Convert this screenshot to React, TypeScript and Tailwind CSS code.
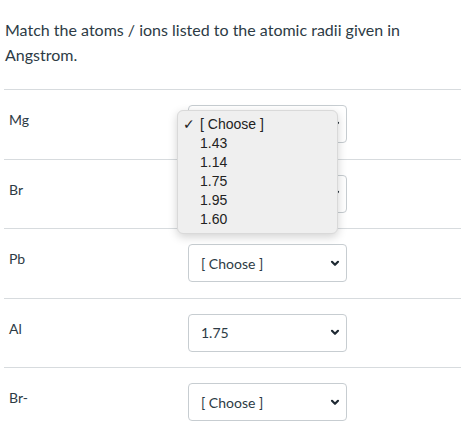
import React from "react";

const rows = [
  { label: "Mg", value: "[ Choose ]" },
  { label: "Br", value: "[ Choose ]" },
  { label: "Pb", value: "[ Choose ]" },
  { label: "Al", value: "1.75" },
  { label: "Br-", value: "[ Choose ]" },
];

function Chevron() {
  return (
    <svg width="10" height="7" viewBox="0 0 10 7" className="shrink-0">
      <path d="M2 1.8 L5 4.8 L8 1.8" fill="none" stroke="#1f2a33" strokeWidth="2.2" strokeLinecap="round" strokeLinejoin="round" />
    </svg>
  );
}

export default function App() {
  return (
    <div className="relative w-[474px] h-[443px] bg-white overflow-hidden text-[#2d3b45]" style={{ fontFamily: "Lato, 'Noto Sans', sans-serif" }}>
      <div className="pl-[5px] pt-[17px] text-[16px] leading-[25px] text-[#2d3b45]">
        <p>Match the atoms / ions listed to the atomic radii given in</p>
        <p>Angstrom.</p>
      </div>
      <div className="ml-[4px] w-[457px] mt-[22px] border-t border-[#d7dbde]">
        {rows.map((r, i) => (
          <div
            key={r.label}
            className={`grid grid-cols-[184px_159px] pt-[15px] ${i < rows.length - 1 ? "pb-[15.5px] border-b border-[#d7dbde]" : "pb-4"}`}
          >
            <div className="pl-[5px] pt-[5px] text-[14px] leading-[20px]">{r.label}</div>
            <div className="h-[38px] flex items-center justify-between pl-[12px] pr-[6px] border border-[#c7cdd1] rounded-[4px] bg-white text-[14px]">
              <span>{r.value}</span>
              <Chevron />
            </div>
          </div>
        ))}
      </div>
      <div
        className="absolute left-[177px] top-[110px] w-[161px] rounded-[6px] bg-[#efefef] border border-[#d9d9d9] shadow-[0_3px_10px_rgba(0,0,0,0.18)] py-[4px] text-[14px] leading-[19px] text-[#222]"
        style={{ fontFamily: "'Liberation Sans', Arial, sans-serif" }}
      >
        {["[ Choose ]", "1.43", "1.14", "1.75", "1.95", "1.60"].map((o, i) => (
          <div key={o} className="flex items-center">
            <span className="w-[22px] pl-[5px] text-[14px]" style={{ fontFamily: "'DejaVu Sans', sans-serif" }}>{i === 0 ? "✓" : ""}</span>
            <span>{o}</span>
          </div>
        ))}
      </div>
    </div>
  );
}
